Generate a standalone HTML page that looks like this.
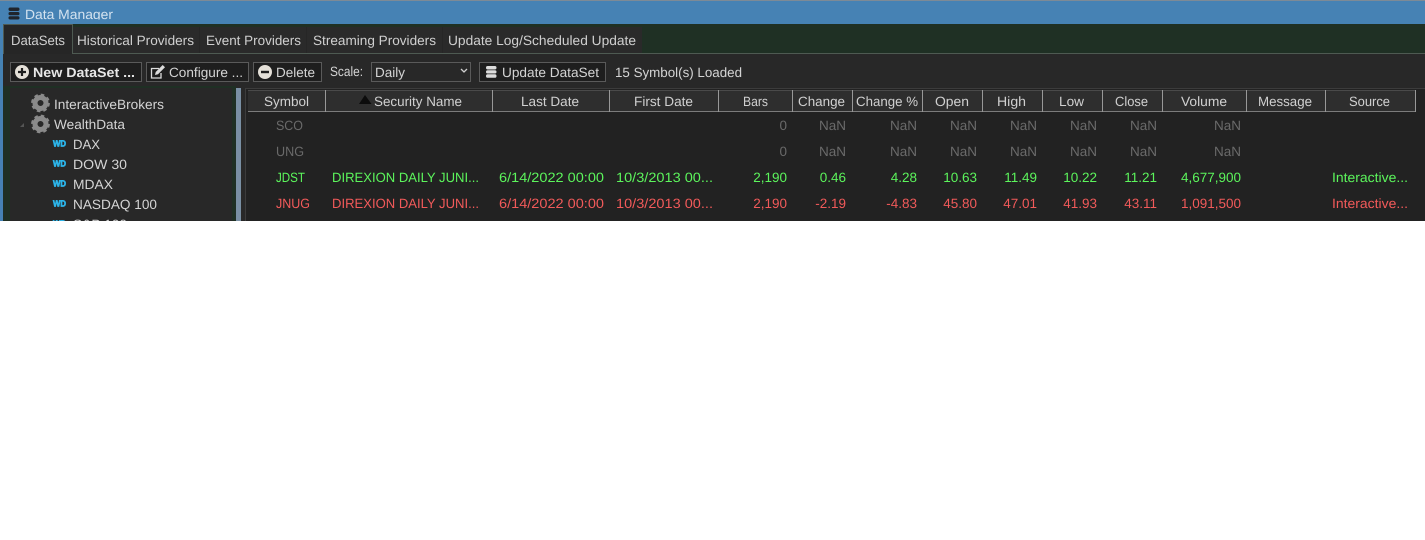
<!DOCTYPE html>
<html><head><meta charset="utf-8"><title>Data Manager</title>
<style>
html,body{margin:0;padding:0;background:#fff;width:1425px;height:540px;overflow:hidden}
svg{display:block}
text{font-family:"Liberation Sans",sans-serif;font-size:13.5px;fill:#d4d4d4;white-space:pre;text-rendering:geometricPrecision}
.t{fill:#cfcfcf}
.h{fill:#d0d0d0}
.g{fill:#6a6a6a}
.u{fill:#5cf55c}
.r{fill:#f25a5a}
.e{text-anchor:end}
</style></head><body>
<svg width="1425" height="540" viewBox="0 0 1425 540" xmlns="http://www.w3.org/2000/svg" shape-rendering="crispEdges">
<defs><g id="gear" shape-rendering="geometricPrecision">
<circle r="5.5" fill="none" stroke="#8a8a8a" stroke-width="5"/>
<circle r="7.9" fill="none" stroke="#8a8a8a" stroke-width="3" stroke-dasharray="3.4 2.8"/>
</g>
<g id="wd" shape-rendering="geometricPrecision"><text font-weight="700" style="font-size:9px;fill:#2cb5ea;stroke:#2cb5ea;stroke-width:.7px" textLength="13" lengthAdjust="spacingAndGlyphs">WD</text></g>
</defs>
<rect width="1425" height="221" fill="#4682b4"/>
<rect width="1425" height="1" fill="#7d8a96"/>
<rect x="3" y="24" width="1422" height="197" fill="#1f3024"/>
<!-- title -->
<g shape-rendering="geometricPrecision" fill="#20252c">
<rect x="8.500" y="7.500" width="11" height="3.500" rx="1.700"/>
<rect x="8.500" y="12" width="11" height="3.200" rx="1.600"/>
<rect x="8.500" y="16.200" width="11" height="3.300" rx="1.600"/>
</g>
<text x="25" y="19" style="fill:#d3e2ef" textLength="88" lengthAdjust="spacingAndGlyphs">Data Manager</text>
<rect x="0" y="19.5" width="1425" height="4.5" fill="#4682b4"/>
<!-- tabs -->
<rect x="73" y="27" width="569" height="26" fill="#2a2a2a"/>
<rect x="199" y="27" width="1" height="26" fill="#262626"/>
<rect x="306" y="27" width="1" height="26" fill="#262626"/>
<rect x="442" y="27" width="1" height="26" fill="#262626"/>
<rect x="3" y="24" width="70" height="30" fill="#4e5a52"/>
<rect x="4" y="25" width="68" height="30" fill="#262626"/>
<rect x="73" y="53" width="1352" height="1" fill="#4e5a52"/>
<rect x="3" y="54" width="1422" height="167" fill="#282828"/>
<rect x="4" y="53" width="68" height="1" fill="#262626"/>
<text x="11" y="45" class="t" textLength="54" lengthAdjust="spacingAndGlyphs">DataSets</text>
<text x="77" y="45" class="t" textLength="117" lengthAdjust="spacingAndGlyphs">Historical Providers</text>
<text x="206" y="45" class="t" textLength="95" lengthAdjust="spacingAndGlyphs">Event Providers</text>
<text x="313" y="45" class="t" textLength="123" lengthAdjust="spacingAndGlyphs">Streaming Providers</text>
<text x="448" y="45" class="t" textLength="188" lengthAdjust="spacingAndGlyphs">Update Log/Scheduled Update</text>
<!-- toolbar -->
<g fill="#1e1e1e" stroke="#5a5a5a">
<rect x="10.5" y="62.5" width="131" height="19"/>
<rect x="146.5" y="62.5" width="102" height="19"/>
<rect x="253.5" y="62.5" width="68" height="19"/>
<rect x="479.5" y="62.5" width="126" height="19"/>
<rect x="371.5" y="62.5" width="99" height="19" fill="#282828"/>
</g>
<g shape-rendering="geometricPrecision">
<circle cx="22" cy="72" r="7" fill="#e4e0d8"/>
<path d="M18 72h8M22 68v8" stroke="#1e1e1e" stroke-width="2.2" fill="none"/>
<path d="M159 68.500h-7.500v9.500h9.500v-5" fill="none" stroke="#dcdcdc" stroke-width="1.300"/>
<path d="M155 75l.7-3 7-7 2.300 2.300-7 7z" fill="#dcdcdc"/>
<circle cx="265" cy="72" r="7" fill="#e4e0d8"/>
<path d="M261 72h8" stroke="#1e1e1e" stroke-width="2.4" fill="none"/>
<path d="M461 69l3 3 3-3" fill="none" stroke="#cfcfcf" stroke-width="1.300"/>
<g fill="#dcdcdc">
<rect x="486" y="66" width="10.500" height="3.500" rx="1.700"/>
<rect x="486" y="70.300" width="10.500" height="3.200" rx="1.600"/>
<rect x="486" y="74.300" width="10.500" height="3.500" rx="1.700"/>
</g>
</g>
<text x="33" y="77" font-weight="700" style="fill:#e6e6e6" textLength="102" lengthAdjust="spacingAndGlyphs">New DataSet ...</text>
<text x="169" y="77" textLength="74" lengthAdjust="spacingAndGlyphs">Configure ...</text>
<text x="276" y="77" textLength="39" lengthAdjust="spacingAndGlyphs">Delete</text>
<text x="330" y="76" textLength="33" lengthAdjust="spacingAndGlyphs">Scale:</text>
<text x="375" y="77" textLength="30" lengthAdjust="spacingAndGlyphs">Daily</text>
<text x="502" y="77" textLength="97" lengthAdjust="spacingAndGlyphs">Update DataSet</text>
<text x="615" y="77" textLength="127" lengthAdjust="spacingAndGlyphs">15 Symbol(s) Loaded</text>
<!-- tree panel -->
<rect x="3" y="86" width="233" height="135" fill="#1f3024"/>
<rect x="10" y="88" width="222" height="133" fill="#282828"/>
<rect x="236" y="88" width="5" height="133" fill="#7a90a4"/>
<use href="#gear" x="40.500" y="103"/>
<use href="#gear" x="40.500" y="124"/>
<path d="M20 127l4-4v4z" fill="#555" shape-rendering="geometricPrecision"/>
<text x="54" y="109" textLength="110" lengthAdjust="spacingAndGlyphs">InteractiveBrokers</text>
<text x="54" y="129" textLength="71" lengthAdjust="spacingAndGlyphs">WealthData</text>
<use href="#wd" x="53" y="146.5"/><use href="#wd" x="53" y="166.5"/><use href="#wd" x="53" y="186.5"/><use href="#wd" x="53" y="206.5"/><use href="#wd" x="53" y="226.5"/>
<text x="73" y="149" textLength="27" lengthAdjust="spacingAndGlyphs">DAX</text>
<text x="73" y="169" textLength="54" lengthAdjust="spacingAndGlyphs">DOW 30</text>
<text x="73" y="189" textLength="40" lengthAdjust="spacingAndGlyphs">MDAX</text>
<text x="73" y="209" textLength="84" lengthAdjust="spacingAndGlyphs">NASDAQ 100</text>
<text x="73" y="229" textLength="54" lengthAdjust="spacingAndGlyphs">S&amp;P 100</text>
<!-- table -->
<rect x="245" y="88" width="1180" height="133" fill="#222222"/>
<rect x="245" y="88" width="1" height="133" fill="#3c3c3c"/>
<rect x="245" y="88" width="1180" height="1" fill="#3c3c3c"/>
<rect x="248" y="90" width="1168" height="22" fill="#2e2e2e"/>
<rect x="248" y="111" width="1168" height="1" fill="#7c7c7c"/>
<rect x="248" y="90" width="1168" height="1" fill="#4a4a4a"/>
<g fill="#989898">
<rect x="325" y="90" width="1" height="22"/><rect x="492" y="90" width="1" height="22"/><rect x="609" y="90" width="1" height="22"/><rect x="718" y="90" width="1" height="22"/><rect x="792" y="90" width="1" height="22"/><rect x="852" y="90" width="1" height="22"/><rect x="922" y="90" width="1" height="22"/><rect x="982" y="90" width="1" height="22"/><rect x="1042" y="90" width="1" height="22"/><rect x="1102" y="90" width="1" height="22"/><rect x="1162" y="90" width="1" height="22"/><rect x="1246" y="90" width="1" height="22"/><rect x="1325" y="90" width="1" height="22"/><rect x="1415" y="90" width="1" height="22"/>
</g>
<path d="M359 104l6-9 6.500 9z" fill="#0c0c0c" shape-rendering="geometricPrecision"/>
<g class="hd">
<text x="264" y="106" class="h" textLength="45" lengthAdjust="spacingAndGlyphs">Symbol</text>
<text x="374" y="106" class="h" textLength="88" lengthAdjust="spacingAndGlyphs">Security Name</text>
<text x="521" y="106" class="h" textLength="58" lengthAdjust="spacingAndGlyphs">Last Date</text>
<text x="634" y="106" class="h" textLength="59" lengthAdjust="spacingAndGlyphs">First Date</text>
<text x="743" y="106" class="h" textLength="25" lengthAdjust="spacingAndGlyphs">Bars</text>
<text x="798" y="106" class="h" textLength="47" lengthAdjust="spacingAndGlyphs">Change</text>
<text x="856" y="106" class="h" textLength="62" lengthAdjust="spacingAndGlyphs">Change %</text>
<text x="935" y="106" class="h" textLength="34" lengthAdjust="spacingAndGlyphs">Open</text>
<text x="997" y="106" class="h" textLength="29" lengthAdjust="spacingAndGlyphs">High</text>
<text x="1059" y="106" class="h" textLength="25" lengthAdjust="spacingAndGlyphs">Low</text>
<text x="1115" y="106" class="h" textLength="33" lengthAdjust="spacingAndGlyphs">Close</text>
<text x="1181" y="106" class="h" textLength="46" lengthAdjust="spacingAndGlyphs">Volume</text>
<text x="1258" y="106" class="h" textLength="54" lengthAdjust="spacingAndGlyphs">Message</text>
<text x="1349" y="106" class="h" textLength="41" lengthAdjust="spacingAndGlyphs">Source</text>
</g>
<!-- rows -->
<g class="rows">
<text x="276" y="130" class="g" textLength="27" lengthAdjust="spacingAndGlyphs">SCO</text>
<text x="787" y="130" class="g e">0</text><text x="846" y="130" class="g e">NaN</text><text x="917" y="130" class="g e">NaN</text><text x="977" y="130" class="g e">NaN</text><text x="1037" y="130" class="g e">NaN</text><text x="1097" y="130" class="g e">NaN</text><text x="1157" y="130" class="g e">NaN</text><text x="1241" y="130" class="g e">NaN</text>
<text x="276" y="156" class="g" textLength="28" lengthAdjust="spacingAndGlyphs">UNG</text>
<text x="787" y="156" class="g e">0</text><text x="846" y="156" class="g e">NaN</text><text x="917" y="156" class="g e">NaN</text><text x="977" y="156" class="g e">NaN</text><text x="1037" y="156" class="g e">NaN</text><text x="1097" y="156" class="g e">NaN</text><text x="1157" y="156" class="g e">NaN</text><text x="1241" y="156" class="g e">NaN</text>
<text x="276" y="182" class="u" textLength="29" lengthAdjust="spacingAndGlyphs">JDST</text>
<text x="332" y="182" class="u" textLength="147" lengthAdjust="spacingAndGlyphs">DIREXION DAILY JUNI...</text>
<text x="499" y="182" class="u" textLength="105" lengthAdjust="spacingAndGlyphs">6/14/2022 00:00</text>
<text x="616" y="182" class="u" textLength="97" lengthAdjust="spacingAndGlyphs">10/3/2013 00...</text>
<text x="787" y="182" class="u e">2,190</text><text x="846" y="182" class="u e">0.46</text><text x="917" y="182" class="u e">4.28</text><text x="977" y="182" class="u e">10.63</text><text x="1037" y="182" class="u e">11.49</text><text x="1097" y="182" class="u e">10.22</text><text x="1157" y="182" class="u e">11.21</text><text x="1241" y="182" class="u e">4,677,900</text>
<text x="1332" y="182" class="u" textLength="76" lengthAdjust="spacingAndGlyphs">Interactive...</text>
<text x="276" y="208" class="r" textLength="34" lengthAdjust="spacingAndGlyphs">JNUG</text>
<text x="332" y="208" class="r" textLength="147" lengthAdjust="spacingAndGlyphs">DIREXION DAILY JUNI...</text>
<text x="499" y="208" class="r" textLength="105" lengthAdjust="spacingAndGlyphs">6/14/2022 00:00</text>
<text x="616" y="208" class="r" textLength="97" lengthAdjust="spacingAndGlyphs">10/3/2013 00...</text>
<text x="787" y="208" class="r e">2,190</text><text x="846" y="208" class="r e">-2.19</text><text x="917" y="208" class="r e">-4.83</text><text x="977" y="208" class="r e">45.80</text><text x="1037" y="208" class="r e">47.01</text><text x="1097" y="208" class="r e">41.93</text><text x="1157" y="208" class="r e">43.11</text><text x="1241" y="208" class="r e">1,091,500</text>
<text x="1332" y="208" class="r" textLength="76" lengthAdjust="spacingAndGlyphs">Interactive...</text>
</g>
<!-- cut-off -->
<rect x="0" y="221" width="1425" height="319" fill="#ffffff"/>
</svg>
</body></html>
